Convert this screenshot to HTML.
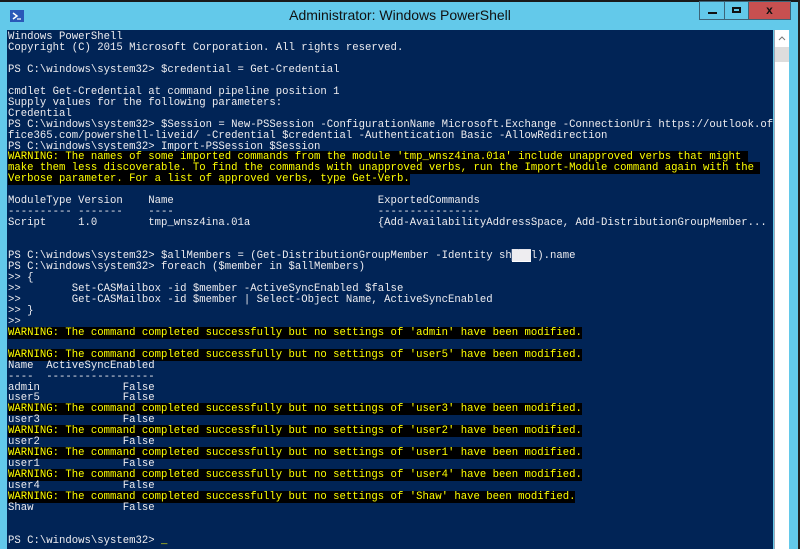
<!DOCTYPE html>
<html><head><meta charset="utf-8"><style>
body{margin:0;width:800px;height:549px;overflow:hidden;background:#63c9ea;position:relative;font-family:"Liberation Sans",sans-serif}
#top{position:absolute;left:0;top:0;width:800px;height:2px;background:#1a1a1a}
#title{position:absolute;left:0;top:7px;width:800px;text-align:center;font-size:14px;color:#111}
#con{position:absolute;left:7px;top:30px;width:766px;height:519px;background:#012456;overflow:hidden}
pre{margin:0;padding:2px 0 0 1px;font-family:"Liberation Mono",monospace;font-size:10.63px;line-height:10.96px;color:#eeedf0;white-space:pre}
.w{background:#000;color:#ffff00}
#sb{position:absolute;left:774px;top:30px;width:14px;height:519px;background:#fff;border-left:1px solid #a0a8b8}
#thumb{position:absolute;left:0;top:17px;width:14px;height:15px;background:#ddd}
#rb{position:absolute;left:798px;top:0;width:2px;height:549px;background:#222}
.btn{position:absolute;top:1px;height:19px;border:1px solid #3c6478;box-sizing:border-box}
</style></head><body>
<div id="top"></div>
<svg style="position:absolute;left:10px;top:10px" width="14" height="12"><rect x="0" y="0" width="14" height="12" fill="#2a58b8"/><path d="M3 3 L7 6 L3 9" stroke="#fff" stroke-width="1.5" fill="none"/><path d="M7 9 H11" stroke="#fff" stroke-width="1.2"/></svg>
<div id="title">Administrator: Windows PowerShell</div>
<div class="btn" style="left:699px;width:26px;background:#63c9ea"><div style="position:absolute;left:8px;top:10px;width:9px;height:2px;background:#111"></div></div>
<div class="btn" style="left:724px;width:25px;background:#63c9ea"><div style="position:absolute;left:7px;top:5px;width:9px;height:6px;border:2px solid #111;box-sizing:border-box"></div></div>
<div class="btn" style="left:748px;width:43px;background:#c75050;text-align:center;font-weight:bold;font-size:12px;line-height:17px;color:#111">x</div>
<div id="con"><pre>Windows PowerShell
Copyright (C) 2015 Microsoft Corporation. All rights reserved.

PS C:\windows\system32&gt; $credential = Get-Credential

cmdlet Get-Credential at command pipeline position 1
Supply values for the following parameters:
Credential
PS C:\windows\system32&gt; $Session = New-PSSession -ConfigurationName Microsoft.Exchange -ConnectionUri https://outlook.of
fice365.com/powershell-liveid/ -Credential $credential -Authentication Basic -AllowRedirection
PS C:\windows\system32&gt; Import-PSSession $Session
<span class="w">WARNING: The names of some imported commands from the module 'tmp_wnsz4ina.01a' include unapproved verbs that might </span>
<span class="w">make them less discoverable. To find the commands with unapproved verbs, run the Import-Module command again with the </span>
<span class="w">Verbose parameter. For a list of approved verbs, type Get-Verb.</span>

ModuleType Version    Name                                ExportedCommands
---------- -------    ----                                ----------------
Script     1.0        tmp_wnsz4ina.01a                    {Add-AvailabilityAddressSpace, Add-DistributionGroupMember...


PS C:\windows\system32&gt; $allMembers = (Get-DistributionGroupMember -Identity sh<span style="background:#fff">███</span>l).name
PS C:\windows\system32&gt; foreach ($member in $allMembers)
&gt;&gt; {
&gt;&gt;        Set-CASMailbox -id $member -ActiveSyncEnabled $false
&gt;&gt;        Get-CASMailbox -id $member | Select-Object Name, ActiveSyncEnabled
&gt;&gt; }
&gt;&gt;
<span class="w">WARNING: The command completed successfully but no settings of 'admin' have been modified.</span>

<span class="w">WARNING: The command completed successfully but no settings of 'user5' have been modified.</span>
Name  ActiveSyncEnabled
----  -----------------
admin             False
user5             False
<span class="w">WARNING: The command completed successfully but no settings of 'user3' have been modified.</span>
user3             False
<span class="w">WARNING: The command completed successfully but no settings of 'user2' have been modified.</span>
user2             False
<span class="w">WARNING: The command completed successfully but no settings of 'user1' have been modified.</span>
user1             False
<span class="w">WARNING: The command completed successfully but no settings of 'user4' have been modified.</span>
user4             False
<span class="w">WARNING: The command completed successfully but no settings of 'Shaw' have been modified.</span>
Shaw              False


PS C:\windows\system32&gt; <span style="color:#ffff00">_</span></pre></div>
<div id="sb"><svg width="14" height="16"><path d="M4 10 L7 7 L10 10" stroke="#777" fill="none"/></svg><div id="thumb"></div></div>
<div id="rb"></div>
</body></html>
